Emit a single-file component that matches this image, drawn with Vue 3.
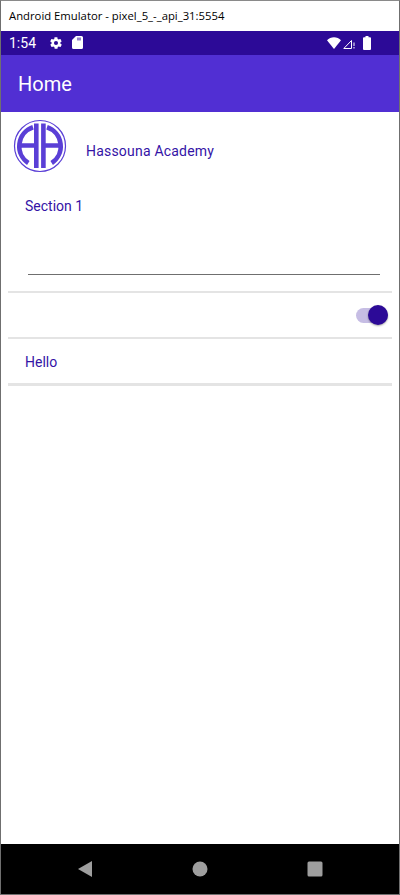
<template>
  <div class="window">
    <div class="title-bar">Android Emulator - pixel_5_-_api_31:5554</div>
    <div class="status-bar">
      <span class="time">1:54</span>
      <svg class="status-icon" width="14" height="14" viewBox="0 0 24 24" fill="#fff">
        <path d="M19.4 13c.1-.3.1-.7.1-1s0-.7-.1-1l2.100-1.600c.2-.2.2-.4.1-.6l-2-3.500c-.1-.2-.4-.3-.6-.2l-2.500 1c-.5-.4-1.100-.7-1.700-1l-.4-2.600c0-.3-.2-.5-.5-.5h-4c-.3 0-.5.2-.5.4l-.4 2.700c-.6.2-1.100.6-1.700 1l-2.500-1c-.2-.1-.5 0-.6.2l-2 3.500c-.1.2-.1.5.1.6L4.600 11c0 .3-.1.7-.1 1s0 .7.1 1l-2.100 1.600c-.2.2-.2.4-.1.6l2 3.500c.1.2.4.3.6.2l2.500-1c.5.4 1.100.7 1.700 1l.4 2.600c0 .3.2.5.5.5h4c.3 0 .5-.2.5-.4l.4-2.700c.6-.2 1.100-.6 1.700-1l2.500 1c.2.1.5 0 .6-.2l2-3.500c.1-.2.1-.5-.1-.6zM12 15.500a3.500 3.500 0 1 1 0-7 3.500 3.500 0 0 1 0 7z"/>
      </svg>
      <svg class="sd" width="11" height="13" viewBox="0 0 11 13" fill="#fff">
        <path d="M4 0H9.500A1.500 1.500 0 0 1 11 1.500v10A1.500 1.500 0 0 1 9.500 13h-8A1.500 1.500 0 0 1 0 11.500V4zM5.500 1.500v3h1v-3zm2 0v3h1v-3z" fill-rule="evenodd"/>
      </svg>
      <span class="spacer"></span>
      <svg width="14" height="12" viewBox="0 0 14 12" fill="#fff">
        <path d="M0 3.200C1.900 1.300 4.300.3 7 .3s5.100 1 7 2.900L7 12z"/>
      </svg>
      <svg class="signal" width="12" height="12" viewBox="0 0 12 12" fill="none" stroke="#fff" stroke-width="1">
        <path d="M.8 11.500L8.500 3.500v8z"/>
        <path d="M11 5.500v3.500M11 10v1.500"/>
      </svg>
      <svg class="battery" width="8" height="14" viewBox="0 0 8 14" fill="#fff">
        <path d="M2.500 0h3v1.200H7a1 1 0 0 1 1 1V13a1 1 0 0 1-1 1H1a1 1 0 0 1-1-1V2.200a1 1 0 0 1 1-1h1.500z"/>
      </svg>
    </div>
    <div class="app-bar">Home</div>

    <main class="content">
      <div class="brand">
        <svg class="logo" width="54" height="54" viewBox="0 0 54 54" fill="none" stroke="#5a3fd6">
          <circle cx="27" cy="27" r="25.500" stroke-width="1.200"/>
          <g stroke-width="4.600">
            <path d="M20 8.300A20 20 0 0 0 15.300 44"/>
            <path d="M34 8.300A20 20 0 0 1 38.700 44"/>
            <path d="M23.300 4.500v44.500M30.400 4.500v44.500"/>
            <path d="M7 26.500h16M31 26.500h16"/>
          </g>
        </svg>
        <span class="brand-name">Hassouna Academy</span>
      </div>

      <div class="section-label">Section 1</div>
      <div class="field-line"></div>
      <div class="divider first"></div>

      <div class="switch-row">
        <div class="switch">
          <span class="track"></span>
          <span class="thumb"></span>
        </div>
      </div>
      <div class="divider"></div>

      <div class="hello">Hello</div>
      <div class="divider thick"></div>
    </main>

    <div class="nav-bar">
      <svg width="16" height="18" viewBox="0 0 16 18" fill="#9e9e9e"><path d="M1 9L15 1v16z"/></svg>
      <svg width="16" height="16" viewBox="0 0 16 16" fill="#9e9e9e"><circle cx="8" cy="8" r="7.500"/></svg>
      <svg width="16" height="16" viewBox="0 0 16 16" fill="#9e9e9e"><rect x="0.500" y="0.500" width="15" height="15" rx="1.500"/></svg>
    </div>
  </div>
</template>

<script setup>
</script>

<style>
html,
body {
  margin: 0;
  background: #fff;
}
</style>

<style scoped>
.window {
  box-sizing: border-box;
  width: 400px;
  height: 895px;
  display: flex;
  flex-direction: column;
  background: #fff;
  border: 1px solid #6f6f6f;
  border-top-color: #8a8a8a;
  font-family: Roboto, "Liberation Sans", sans-serif;
  overflow: hidden;
}

.title-bar {
  height: 30px;
  line-height: 30px;
  padding-left: 8px;
  font-family: "Open Sans", "Liberation Sans", sans-serif;
  font-size: 11.300px;
  color: #000;
  background: #fff;
}

.status-bar {
  height: 24px;
  display: flex;
  align-items: center;
  padding: 0 28px 0 8px;
  background: #2c0a97;
  color: #fff;
}

.time {
  font-size: 14px;
  width: 40px;
}

.status-icon {
  margin-right: 9px;
}

.sd {
  margin-top: -1px;
}

.spacer {
  flex: 1;
}

.signal {
  margin-left: 2px;
}

.battery {
  margin-left: 8px;
}

.app-bar {
  height: 57px;
  display: flex;
  align-items: center;
  padding-left: 17px;
  font-size: 20px;
  color: #fff;
  background: #512fd3;
}

.content {
  flex: 1;
  padding: 0 7px;
  color: #3413a6;
  font-size: 14px;
}

.brand {
  display: flex;
  align-items: flex-start;
  height: 79px;
  padding: 7px 5px 0;
  box-sizing: border-box;
}

.brand-name {
  margin-left: 19px;
  letter-spacing: 0.200px;
  margin-top: 24px;
}

.section-label {
  padding-left: 17px;
  line-height: 20px;
  margin-top: 5px;
}

.field-line {
  height: 1px;
  margin: 58px 12px 0 20px;
  background: #6f6f6f;
}

.divider {
  height: 2px;
  background: #e4e4e4;
}

.divider.first {
  margin-top: 16px;
}

.divider.thick {
  height: 3px;
}

.switch-row {
  box-sizing: border-box;
  height: 44px;
  display: flex;
  align-items: center;
  justify-content: flex-end;
  padding: 0 4px 0 0;
}

.switch {
  position: relative;
  width: 32px;
  height: 21px;
}

.track {
  position: absolute;
  left: 0;
  top: 3px;
  width: 32px;
  height: 15px;
  border-radius: 8px;
  background: #c6bde4;
}

.thumb {
  position: absolute;
  right: 0;
  top: 0;
  width: 20px;
  height: 20px;
  border-radius: 50%;
  background: #2c0a97;
  box-shadow: 0 1px 2px rgba(0, 0, 0, 0.35);
}

.hello {
  height: 44px;
  line-height: 46px;
  padding-left: 17px;
}

.nav-bar {
  height: 50px;
  display: grid;
  grid-template-columns: repeat(3, 16px);
  justify-content: center;
  column-gap: 99px;
  align-items: center;
  background: #000;
}

.nav-bar svg {
  display: block;
}
</style>
